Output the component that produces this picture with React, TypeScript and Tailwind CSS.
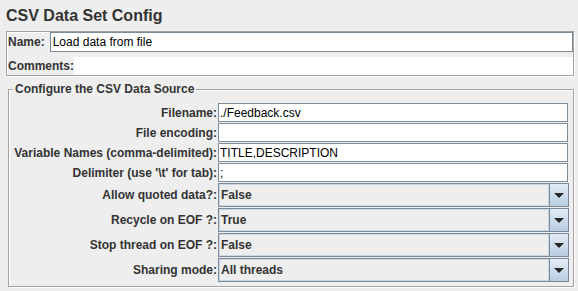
const etched = "border border-[#a3a3a3] shadow-[inset_1px_1px_0_#ffffff,1px_1px_0_#ffffff]"

const TextRow = ({ label, value }: { label: string; value: string }) => (
    <>
        <div className="h-[19px] flex items-center justify-end font-bold whitespace-nowrap">{label}</div>
        <div className="h-[19px] flex items-center pl-[1px] bg-white border border-[#7f8d9a] text-black whitespace-nowrap overflow-hidden">{value}</div>
    </>
)

const ComboRow = ({ label, value }: { label: string; value: string }) => (
    <>
        <div className="h-[24px] flex items-center justify-end font-bold whitespace-nowrap">{label}</div>
        <div className="h-[24px] mr-[-1px] flex border border-[#7a8a99] bg-[#eeeeee]">
            <div className="flex-1 flex items-center pl-[1px] font-bold border border-[#c9d7e5]">{value}</div>
            <div className="w-[19px] flex items-center justify-center border-l border-[#7a8a99] bg-gradient-to-b from-[#e3ecf5] to-[#b8cde2]">
                <svg width="10" height="5" viewBox="0 0 10 5">
                    <path d="M0 0h10L5 5z" fill="#262626" />
                </svg>
            </div>
        </div>
    </>
)

export default function App() {
    return (
        <div className="w-[578px] h-[291px] overflow-hidden bg-[#eeeeee] text-[#333333] text-[12px] font-['Liberation_Sans',Arial,sans-serif]">
            <div className="h-[31px] pl-[6px] pt-[6px] text-[16px] leading-[20px] font-bold">CSV Data Set Config</div>

            <div className={"ml-[6px] mr-[4px] h-[45px] " + etched}>
                <div className="flex items-center h-[20px]">
                    <span className="pl-[1px] font-bold">Name:</span>
                    <div className="flex-1 ml-[5px] h-[20px] flex items-center pl-[2px] bg-white border border-[#7f8d9a] text-black">Load data from file</div>
                </div>
                <div className="flex items-center h-[18px] mt-[5px]">
                    <span className="pl-[1px] font-bold">Comments:</span>
                    <div className="flex-1 h-[18px] bg-white"></div>
                </div>
            </div>

            <fieldset className={"ml-[8px] mr-[4px] mt-[6px] pt-[6px] pb-[4px] pr-[5px] " + etched}>
                <legend className="ml-[4px] px-[2px] font-bold leading-[15px]">Configure the CSV Data Source</legend>
                <div className="grid grid-cols-[208px_1fr] gap-x-[1px] gap-y-[1px]">
                    <TextRow label="Filename:" value="./Feedback.csv" />
                    <TextRow label="File encoding:" value="" />
                    <TextRow label="Variable Names (comma-delimited):" value="TITLE,DESCRIPTION" />
                    <TextRow label="Delimiter (use '\t' for tab):" value=";" />
                    <ComboRow label="Allow quoted data?:" value="False" />
                    <ComboRow label="Recycle on EOF ?:" value="True" />
                    <ComboRow label="Stop thread on EOF ?:" value="False" />
                    <ComboRow label="Sharing mode:" value="All threads" />
                </div>
            </fieldset>
        </div>
    )
}
